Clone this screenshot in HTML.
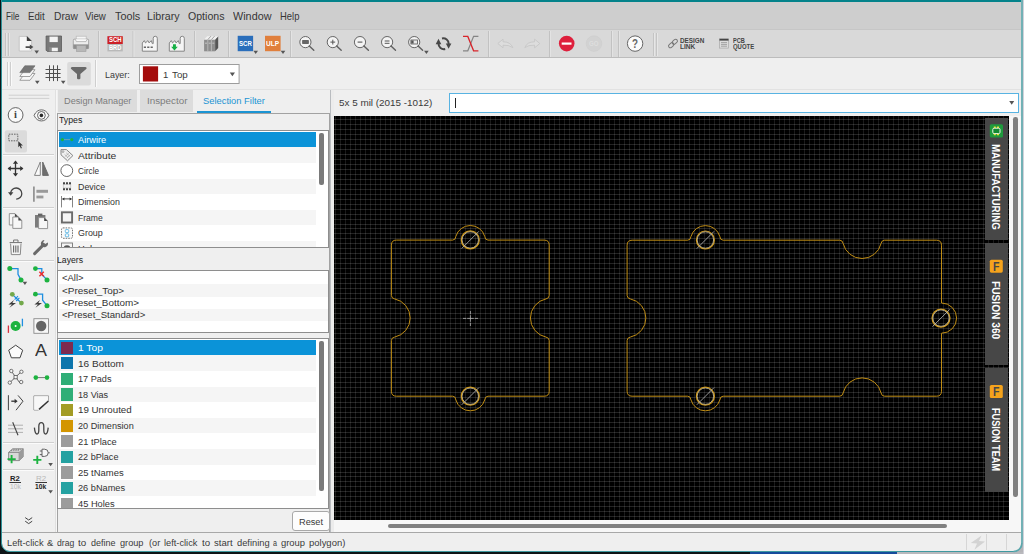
<!DOCTYPE html>
<html><head><meta charset="utf-8"><title>EAGLE Board Editor</title>
<style>
html,body{margin:0;padding:0;}
body{width:1024px;height:554px;overflow:hidden;position:relative;background:#8f9194;font-family:"Liberation Sans",sans-serif;}
.r{position:absolute;display:block;box-sizing:border-box;}
.t{position:absolute;white-space:nowrap;transform-origin:0 0;display:block;}
</style></head><body>
<div class="r" style="left:0px;top:0px;width:1024.00px;height:554.00px;background:linear-gradient(90deg,#0d1416 0px,#0d1416 750.5px,#164b9c 750.5px,#164b9c 897.5px,#b9b9bd 897.5px,#b9b9bd 1024px);"></div>
<div class="r" style="left:1023px;top:0px;width:1.00px;height:554.00px;background:#d2d2d9;"></div>
<div class="r" style="left:0px;top:0px;width:1.00px;height:554.00px;background:#0c1618;"></div>
<div class="r" id="win" style="left:1px;top:0;width:1022px;height:552px;background:#efefef;border-radius:0 0 8px 8px;overflow:hidden;box-shadow:inset 1px 0 0 #2f9299, inset -2px 0 0 #72b1b5, inset 0 -1px 0 #3f9aa0;"></div>
<div class="r" style="left:2px;top:0px;width:1019.00px;height:2.00px;background:#04838b;"></div>
<div class="r" style="left:1px;top:0px;width:1.00px;height:2.00px;background:#04838b;"></div>
<div class="r" style="left:1021px;top:0px;width:2.00px;height:2.00px;background:#04838b;"></div>
<div class="r" style="left:2px;top:2px;width:1019.00px;height:27.00px;background:#cecece;"></div>
<div class="r" style="left:2px;top:29px;width:1019.00px;height:1.00px;background:#c6c6c6;"></div>
<span class="t" style="left:5.90px;top:10.93px;font-size:10.6px;line-height:10.6px;color:#363636;transform:scaleX(0.7845);">File</span>
<span class="t" style="left:27.90px;top:10.93px;font-size:10.6px;line-height:10.6px;color:#363636;transform:scaleX(0.9143);">Edit</span>
<span class="t" style="left:53.70px;top:10.93px;font-size:10.6px;line-height:10.6px;color:#363636;transform:scaleX(0.9662);">Draw</span>
<span class="t" style="left:85.40px;top:10.93px;font-size:10.6px;line-height:10.6px;color:#363636;transform:scaleX(0.9173);">View</span>
<span class="t" style="left:114.50px;top:10.93px;font-size:10.6px;line-height:10.6px;color:#363636;transform:scaleX(1.0224);">Tools</span>
<span class="t" style="left:147.30px;top:10.93px;font-size:10.6px;line-height:10.6px;color:#363636;transform:scaleX(1.0030);">Library</span>
<span class="t" style="left:187.90px;top:10.93px;font-size:10.6px;line-height:10.6px;color:#363636;transform:scaleX(0.9991);">Options</span>
<span class="t" style="left:232.70px;top:10.93px;font-size:10.6px;line-height:10.6px;color:#363636;transform:scaleX(1.0212);">Window</span>
<span class="t" style="left:279.70px;top:10.93px;font-size:10.6px;line-height:10.6px;color:#363636;transform:scaleX(0.8899);">Help</span>
<div class="r" style="left:2px;top:30px;width:1019.00px;height:27.00px;background:#d9d9d9;"></div>
<div class="r" style="left:2px;top:57px;width:1019.00px;height:1.00px;background:#bcbcbc;"></div>
<div class="r" style="left:2px;top:58px;width:1019.00px;height:31.00px;background:#efefef;"></div>
<div class="r" style="left:2px;top:89px;width:1019.00px;height:1.00px;background:#e2e2e2;"></div>
<svg class="r" style="left:0;top:0;pointer-events:none" width="1024" height="554" viewBox="0 0 1024 554"><path d="M5.5 33v23M8.5 33v23" stroke="#c4c4c4" stroke-width="1"/><path d="M6.5 33v23M9.5 33v23" stroke="#e6e6e6" stroke-width="1"/><path d="M98.5 31v26" stroke="#c2c2c2" stroke-width="1"/><path d="M99.5 31v26" stroke="#e3e3e3" stroke-width="1"/><path d="M133 31v26" stroke="#c2c2c2" stroke-width="1"/><path d="M134 31v26" stroke="#e3e3e3" stroke-width="1"/><path d="M194.5 31v26" stroke="#c2c2c2" stroke-width="1"/><path d="M195.5 31v26" stroke="#e3e3e3" stroke-width="1"/><path d="M228.5 31v26" stroke="#c2c2c2" stroke-width="1"/><path d="M229.5 31v26" stroke="#e3e3e3" stroke-width="1"/><path d="M290.5 31v26" stroke="#c2c2c2" stroke-width="1"/><path d="M291.5 31v26" stroke="#e3e3e3" stroke-width="1"/><path d="M488.5 31v26" stroke="#c2c2c2" stroke-width="1"/><path d="M489.5 31v26" stroke="#e3e3e3" stroke-width="1"/><path d="M549.5 31v26" stroke="#c2c2c2" stroke-width="1"/><path d="M550.5 31v26" stroke="#e3e3e3" stroke-width="1"/><path d="M611.5 31v26" stroke="#c2c2c2" stroke-width="1"/><path d="M612.5 31v26" stroke="#e3e3e3" stroke-width="1"/><path d="M618.5 31v26" stroke="#c2c2c2" stroke-width="1"/><path d="M619.5 31v26" stroke="#e3e3e3" stroke-width="1"/><path d="M653.5 33v23M656.5 33v23" stroke="#c4c4c4" stroke-width="1"/><path d="M654.5 33v23M657.5 33v23" stroke="#e6e6e6" stroke-width="1"/><path d="M19.2 36.4h7.8l4.6 4.6v10h-12.4z" fill="#f6f6f6" stroke="#c2c2c2" stroke-width="0.9"/><path d="M26.8 36.1l5 5h-5z" fill="#3c3c3c"/><path d="M25.6 46.3h4.2v-1.7l3.6 2.5-3.6 2.5v-1.7h-4.2z" fill="#4a4a4a"/><path d="M34.4 50.5h4.6l-2.3 3.2z" fill="#555"/><path d="M46.1 36h15.4v15.4h-14.2l-1.2-1.2z" fill="#787878" stroke="#5a5a5a" stroke-width="0.8"/><rect x="49.5" y="36.6" width="8.3" height="5.5" fill="#f3f3f3"/><rect x="49.2" y="47.2" width="8.9" height="4.2" fill="#8c8c8c"/><rect x="51.8" y="47.8" width="6" height="3.4" fill="#f3f3f3"/><rect x="76.2" y="36.2" width="10" height="4.4" fill="#f5f5f5" stroke="#bdbdbd" stroke-width="0.8"/><rect x="73.3" y="39.2" width="15.3" height="9.4" rx="1" fill="#ededed" stroke="#9a9a9a" stroke-width="0.8"/><path d="M75.2 39.2l1.2 2.4h9.6l1.2-2.4" fill="#fafafa" stroke="#a5a5a5" stroke-width="0.7"/><rect x="73.3" y="44.4" width="15.3" height="4.4" fill="#8e8e8e"/><rect x="76.6" y="45.4" width="9.4" height="6" fill="#b8b8b8" stroke="#9a9a9a" stroke-width="0.6"/><rect x="107.4" y="36.2" width="15.4" height="7.8" fill="#cc2027"/><rect x="107.4" y="44" width="15.4" height="7.4" fill="#b9b9b9"/><path d="M142.3 51.2V43l2-2.4 1.2 2.3 2.4-2.3 1.2 2.3 2.2-2.3 1 3h0.9v-5.3a2 2 0 0 1 4.1 0V51.2z" fill="#f5f5f5" stroke="#858585" stroke-width="1" stroke-linejoin="round"/><path d="M143.8 47.2h2.2m1.2 0h2.2m1.2 0h2.2" stroke="#666" stroke-width="1.4"/><path d="M169.3 51.2V43l2-2.4 1.2 2.3 2.4-2.3 1.2 2.3 2.2-2.3 1 3h0.9v-5.3a2 2 0 0 1 4.1 0V51.2z" fill="#f5f5f5" stroke="#858585" stroke-width="1" stroke-linejoin="round"/><path d="M173 44.2h2.9v2.6h1.9l-3.35 3.6-3.35-3.6h1.9z" fill="#16b045"/><path d="M215.1 39.6l3.1-3.4v11.8l-3.1 3.3z" fill="#555"/><path d="M204.1 39.6h11v11.7h-11z" fill="#8e8e8e"/><path d="M207.8 39.6v11.7M211.4 39.6v11.7" stroke="#c9c9c9" stroke-width="0.7"/><path d="M205 43.2h2M208.7 43.2h2M212.3 43.2h2" stroke="#c4c4c4" stroke-width="1"/><path d="M204.1 39.6l3.1-3.4h11l-3.1 3.4z" fill="#f0f0f0"/><path d="M207.8 39.6l3.1-3.4M211.4 39.6l3.1-3.4" stroke="#8a8a8a" stroke-width="0.8"/><rect x="237.7" y="35.8" width="15.4" height="15.4" fill="#2a6ebb"/><path d="M253.4 50.7h4.6l-2.3 3.2z" fill="#555"/><rect x="265" y="35.8" width="15.6" height="15.4" fill="#e07f3c"/><path d="M280.7 50.7h4.6l-2.3 3.2z" fill="#555"/><circle cx="305.4" cy="42.1" r="5.6" fill="#f4f4f4" stroke="#666" stroke-width="1"/><path d="M309.3 46.0l4.5 4.3" stroke="#606060" stroke-width="1.4" stroke-linecap="round"/><rect x="302.1" y="40.1" width="6.8" height="3.8" rx="0.6" fill="#666"/><circle cx="332.8" cy="42.1" r="5.6" fill="#f4f4f4" stroke="#666" stroke-width="1"/><path d="M336.7 46.0l4.5 4.3" stroke="#606060" stroke-width="1.4" stroke-linecap="round"/><path d="M330.4 42.1h4.8M332.8 39.7v4.8" stroke="#555" stroke-width="1"/><circle cx="360" cy="42.1" r="5.6" fill="#f4f4f4" stroke="#666" stroke-width="1"/><path d="M363.9 46.0l4.5 4.3" stroke="#606060" stroke-width="1.4" stroke-linecap="round"/><path d="M357.6 42.1h4.8" stroke="#555" stroke-width="1.1"/><circle cx="387.1" cy="42.1" r="5.6" fill="#f4f4f4" stroke="#666" stroke-width="1"/><path d="M391.0 46.0l4.5 4.3" stroke="#606060" stroke-width="1.4" stroke-linecap="round"/><path d="M384.7 41h4.8M384.7 43.3h4.8" stroke="#555" stroke-width="1"/><circle cx="414.2" cy="42.1" r="5.6" fill="#f4f4f4" stroke="#666" stroke-width="1"/><path d="M418.1 46.0l4.5 4.3" stroke="#606060" stroke-width="1.4" stroke-linecap="round"/><rect x="410.9" y="40" width="6.6" height="4" fill="#e8e8e8" stroke="#555" stroke-width="0.8"/><rect x="411.2" y="40.5" width="2.4" height="3" fill="#555"/><path d="M424.1 50.8h4.6l-2.3 3.2z" fill="#555"/><path d="M438.5 43.6A5.5 5.5 0 0 0 445.2 49.1" fill="none" stroke="#484848" stroke-width="2"/><path d="M435.7 44.2h5.6l-2.8-5.4z" fill="#484848"/><path d="M448.7 43.9A5.5 5.5 0 0 0 442 38.4" fill="none" stroke="#484848" stroke-width="2"/><path d="M451.4 43.4h-5.6l2.8 5.4z" fill="#484848"/><path d="M463 50.8h4.8l5.8-14.4h4.8" fill="none" stroke="#858585" stroke-width="1.2"/><path d="M463 36.4h4.8l5.8 14.4h4.8" fill="none" stroke="#d8242b" stroke-width="1.3"/><path d="M497.8 43.5l5.2-4.3v2.6q7.6 0 9.8 5.8q-3.6-2.8-9.8-2.4v2.6z" fill="#dddddd" stroke="#c4c4c4" stroke-width="0.8" stroke-linejoin="round"/><path d="M539.8 43.5l-5.2-4.3v2.6q-7.6 0-9.8 5.8q3.6-2.8 9.8-2.4v2.6z" fill="#dddddd" stroke="#c4c4c4" stroke-width="0.8" stroke-linejoin="round"/><circle cx="566.7" cy="43.6" r="7.8" fill="#de1f3c"/><rect x="561.7" y="42.5" width="9.8" height="2.2" fill="#fff"/><circle cx="594" cy="43.6" r="7.8" fill="#d2d2d2" stroke="#cccccc" stroke-width="0.6"/><circle cx="635.1" cy="43.6" r="7.7" fill="#fbfbfb" stroke="#666" stroke-width="1"/><g fill="none" stroke="#777" stroke-width="1"><rect x="-2.9" y="-1.8" width="5.8" height="3.6" rx="1.8" transform="translate(671.2 45.2) rotate(-40)"/><rect x="-2.9" y="-1.8" width="5.8" height="3.6" rx="1.8" transform="translate(674.8 41.8) rotate(-40)"/></g><rect x="719.5" y="38.8" width="9" height="9.3" fill="#dcdcdc" stroke="#a9a9a9" stroke-width="0.7"/><rect x="719.5" y="38.8" width="9" height="1.8" fill="#444"/><path d="M721 42.6h6M721 44.4h6M721 46.2h6" stroke="#9c9c9c" stroke-width="0.9"/></svg>
<span class="t" style="left:109.30px;top:36.35px;font-size:7.5px;line-height:7.5px;color:#fff;font-weight:bold;transform:scaleX(0.7957);">SCH</span>
<span class="t" style="left:109.30px;top:43.75px;font-size:7.5px;line-height:7.5px;color:#fff;font-weight:bold;transform:scaleX(0.7508);">BRD</span>
<span class="t" style="left:238.90px;top:40.05px;font-size:7.5px;line-height:7.5px;color:#fff;font-weight:bold;transform:scaleX(0.8146);">SCR</span>
<span class="t" style="left:266.30px;top:40.05px;font-size:7.5px;line-height:7.5px;color:#fff;font-weight:bold;transform:scaleX(0.8733);">ULP</span>
<span class="t" style="left:589.30px;top:39.83px;font-size:8px;line-height:8px;color:#dedede;font-weight:bold;transform:scaleX(0.7634);">GO</span>
<span class="t" style="left:632.20px;top:37.30px;font-size:13px;line-height:13px;color:#666;font-weight:bold;transform:scaleX(0.7556);">?</span>
<span class="t" style="left:679.70px;top:38.17px;font-size:6.3px;line-height:6.3px;color:#444;font-weight:bold;transform:scaleX(1.0102);">DESIGN</span>
<span class="t" style="left:679.70px;top:43.97px;font-size:6.3px;line-height:6.3px;color:#444;font-weight:bold;transform:scaleX(1.0409);">LINK</span>
<span class="t" style="left:733.20px;top:38.17px;font-size:6.3px;line-height:6.3px;color:#444;font-weight:bold;transform:scaleX(0.8871);">PCB</span>
<span class="t" style="left:733.20px;top:43.97px;font-size:6.3px;line-height:6.3px;color:#444;font-weight:bold;transform:scaleX(0.9419);">QUOTE</span>
<svg class="r" style="left:0;top:0;pointer-events:none" width="1024" height="554" viewBox="0 0 1024 554"><path d="M7.5 62v24M10.5 62v24" stroke="#cfcfcf" stroke-width="1"/><path d="M8.5 62v24M11.5 62v24" stroke="#fafafa" stroke-width="1"/><path d="M19.8 72.6l5-6.8h10.2l-5 6.8z" fill="#f7f7f7" stroke="#8a8a8a" stroke-width="0.8" transform="translate(0 7.7)"/><path d="M19.8 72.6l5-6.8h10.2l-5 6.8z" fill="#f7f7f7" stroke="#8a8a8a" stroke-width="0.8" transform="translate(0 3.9)"/><path d="M19.8 72.6l5-6.8h10.2l-5 6.8z" fill="#767676" stroke="#666" stroke-width="0.6"/><path d="M35.0 80.7h4.6l-2.3 3.2z" fill="#555"/><path d="M49.5 65.3v15.8M53.5 65.3v15.8M57.5 65.3v15.8M45.5 69.5h15.1M45.5 73.5h15.1M45.5 77.5h15.1" stroke="#505050" stroke-width="1"/><path d="M60.9 80.7h4.6l-2.3 3.2z" fill="#555"/><rect x="67.2" y="61.9" width="23.6" height="23.6" rx="2" fill="#dbdbdb"/><path d="M72.3 66.9h13q1.8 0.1 1.2 1.8l-6.1 5.2v4.5q-1.7 1.7-3.4 0v-4.5l-6.1-5.2q-0.6-1.7 1.4-1.8z" fill="#696969"/><path d="M95.5 60v27" stroke="#cfcfcf" stroke-width="1"/><path d="M96.5 60v27" stroke="#fafafa" stroke-width="1"/><rect x="139.5" y="64.5" width="99.6" height="19" fill="#fff" stroke="#9d9d9d" stroke-width="1"/><rect x="142.9" y="66.3" width="15.2" height="15.2" fill="#a40c0c"/><path d="M229.8 72.5h5.2l-2.6 3.7z" fill="#555"/></svg>
<span class="t" style="left:104.60px;top:69.59px;font-size:9.7px;line-height:9.7px;color:#3a3a3a;transform:scaleX(0.9199);">Layer:</span>
<span class="t" style="left:163.30px;top:69.59px;font-size:9.7px;line-height:9.7px;color:#3a3a3a;transform:scaleX(0.9824);">1</span>
<span class="t" style="left:172.30px;top:69.59px;font-size:9.7px;line-height:9.7px;color:#3a3a3a;transform:scaleX(1.0102);">Top</span>
<div class="r" style="left:2px;top:90px;width:54.00px;height:442.00px;background:#efefef;"></div>
<div class="r" style="left:55px;top:90px;width:1.00px;height:442.00px;background:#e0e0e0;"></div>
<svg class="r" style="left:0;top:0;pointer-events:none" width="1024" height="554" viewBox="0 0 1024 554"><path d="M8.7 95.2h40.6M8.7 98.4h40.6" stroke="#cfcfcf" stroke-width="1"/><path d="M3 154.5h51" stroke="#d0d0d0" stroke-width="1"/><path d="M3 155.5h51" stroke="#fbfbfb" stroke-width="1"/><path d="M3 207.5h51" stroke="#d0d0d0" stroke-width="1"/><path d="M3 208.5h51" stroke="#fbfbfb" stroke-width="1"/><path d="M3 260.5h51" stroke="#d0d0d0" stroke-width="1"/><path d="M3 261.5h51" stroke="#fbfbfb" stroke-width="1"/><path d="M3 442.5h51" stroke="#d0d0d0" stroke-width="1"/><path d="M3 443.5h51" stroke="#fbfbfb" stroke-width="1"/><path d="M3 469.5h51" stroke="#d0d0d0" stroke-width="1"/><path d="M3 470.5h51" stroke="#fbfbfb" stroke-width="1"/><circle cx="15.6" cy="115" r="7.4" fill="#fafafa" stroke="#555" stroke-width="0.9"/><path d="M34.1 115.4C37 108 45.9 108 48.8 115.4C45.9 122.8 37 122.8 34.1 115.4z" fill="#fafafa" stroke="#555" stroke-width="0.9"/><circle cx="41.4" cy="115.4" r="3.9" fill="none" stroke="#555" stroke-width="0.9"/><circle cx="41.4" cy="115.4" r="1.8" fill="#2a2a2a"/><rect x="4.8" y="130.2" width="22.2" height="22.3" rx="2" fill="#dbdbdb"/><rect x="8.8" y="134.2" width="9" height="6.6" fill="none" stroke="#666" stroke-width="1" stroke-dasharray="1.6 1"/><path d="M18.3 141.2l4.6 4.2h-2.2l1.2 2.6-1 0.5-1.2-2.7-1.4 1.5z" fill="#333"/><path d="M15.5 161.5v14M8.5 168.5h14" stroke="#333" stroke-width="1.3"/><path d="M15.5 160.6l2.6 3.2h-5.2zM15.5 176.4l2.6-3.2h-5.2zM7.6 168.5l3.2-2.6v5.2zM23.4 168.5l-3.2-2.6v5.2z" fill="#333"/><path d="M40.3 162l-5.8 13.4h5.8z" fill="#fafafa" stroke="#777" stroke-width="0.9"/><path d="M42.7 162l5.8 13.4h-5.8z" fill="#6e6e6e" stroke="#666" stroke-width="0.9"/><path d="M10.6 193.4a5.6 5.6 0 1 1 5.6 5.8" fill="none" stroke="#444" stroke-width="1.3"/><path d="M8 192.2h5.4l-2.7 3.6z" fill="#444"/><path d="M33.9 186.4v15.4" stroke="#8a8a8a" stroke-width="1.6"/><path d="M36.4 191.3h11.6" stroke="#9a9a9a" stroke-width="3"/><path d="M36.4 197h7" stroke="#9a9a9a" stroke-width="2.8"/><path d="M9.3 213.6h5.6l3.4 3.4v8.0h-9z" fill="#f7f7f7" stroke="#8a8a8a" stroke-width="0.9"/><path d="M14.9 213.6l3.4 3.4h-3.4z" fill="#444"/><path d="M12.8 217h5.6l3.4 3.4v8.0h-9z" fill="#f7f7f7" stroke="#8a8a8a" stroke-width="0.9"/><path d="M18.400000000000002 217l3.4 3.4h-3.4z" fill="#444"/><rect x="35" y="215" width="10.4" height="12.6" fill="#7c7c7c"/><rect x="38" y="213.6" width="4.4" height="2.6" fill="#666"/><path d="M38.6 217.6h5.6l3.4 3.4v7.6h-9z" fill="#f7f7f7" stroke="#8a8a8a" stroke-width="0.9"/><path d="M44.2 217.6l3.4 3.4h-3.4z" fill="#444"/><path d="M9.6 242.6h12.4" stroke="#777" stroke-width="1.1"/><path d="M13.6 242.2v-2.2h4.4v2.2" fill="none" stroke="#777" stroke-width="1"/><path d="M10.6 243.6l0.7 11h9l0.7-11" fill="#f4f4f4" stroke="#8a8a8a" stroke-width="1"/><path d="M13.6 245.6v7M15.8 245.6v7M18 245.6v7" stroke="#666" stroke-width="1.1"/><path d="M34.6 253.6l9-9" stroke="#6a6a6a" stroke-width="3" stroke-linecap="round"/><path d="M47.9 242.6a3.6 3.6 0 1 1-3.4-2.6l-1.4 2.4 2 1.6z" fill="#6a6a6a"/><path d="M9.8 268.6h8.2v5.8l3 5.5" fill="none" stroke="#1f8fe0" stroke-width="1.3"/><circle cx="9.8" cy="268.6" r="2.5" fill="#1db340"/><circle cx="21" cy="279.9" r="2.5" fill="#1db340"/><path d="M22.6 281.7h4.6l-2.3 3.2z" fill="#555"/><path d="M35.4 268.6h6.4v5.8l5.2 5.5" fill="none" stroke="#1f8fe0" stroke-width="1.3"/><circle cx="35.4" cy="268.6" r="2.4" fill="#1db340"/><circle cx="47" cy="279.9" r="2.5" fill="#1db340"/><path d="M39.4 271.8l4.4 4.4M43.8 271.8l-4.4 4.4" stroke="#f02b2b" stroke-width="1.4"/><path d="M13.6 295.6l6.4 6.2" stroke="#1f8fe0" stroke-width="1.3"/><path d="M14.6 299.6l3.4-3.4M16.2 301l3.2-3.2" stroke="#1f8fe0" stroke-width="1.1"/><circle cx="12.3" cy="294.3" r="2.4" fill="#72a84a"/><circle cx="21.4" cy="303.1" r="2.4" fill="#72a84a"/><path d="M14.0 300.1l-5.6 4.4h3.6l-2.6 3.2l6.6-4.6h-3.6z" fill="#3c3c3c"/><path d="M35.4 294.2h7.2v6l4.4 5.5" fill="none" stroke="#1f8fe0" stroke-width="1.3"/><circle cx="35.4" cy="294.2" r="2.4" fill="#1db340"/><circle cx="47" cy="305.7" r="2.5" fill="#1db340"/><path d="M40.0 300.1l-5.6 4.4h3.6l-2.6 3.2l6.6-4.6h-3.6z" fill="#3c3c3c"/><path d="M22.4 318.7v7.6" stroke="#1f8fe0" stroke-width="1.3"/><path d="M8.4 325.5v7.4" stroke="#d8313e" stroke-width="1.3"/><circle cx="15.6" cy="326" r="5" fill="#1db340"/><circle cx="15.6" cy="326" r="1" fill="#fff"/><rect x="33.9" y="318.7" width="14.6" height="14.6" fill="#f7f7f7" stroke="#8a8a8a" stroke-width="0.9"/><circle cx="41.2" cy="326" r="5.2" fill="#666"/><path d="M15.7 345.2l7 5-2.7 7.6h-8.6l-2.7-7.6z" fill="#fbfbfb" stroke="#444" stroke-width="1"/><path d="M11.3 371l8.6 12M21.4 371.6l-11.6 11" stroke="#555" stroke-width="0.9"/><rect x="14" y="375.6" width="3.2" height="3.2" fill="#f7f7f7" stroke="#555" stroke-width="0.8"/><circle cx="11.3" cy="371" r="1.7" fill="#f7f7f7" stroke="#555" stroke-width="0.8"/><circle cx="21.4" cy="371.8" r="1.7" fill="#f7f7f7" stroke="#555" stroke-width="0.8"/><circle cx="9.8" cy="382.6" r="1.7" fill="#f7f7f7" stroke="#555" stroke-width="0.8"/><circle cx="21.2" cy="382" r="1.7" fill="#f7f7f7" stroke="#555" stroke-width="0.8"/><path d="M35.8 377.6h11.2" stroke="#777" stroke-width="1"/><circle cx="35.8" cy="377.6" r="2.3" fill="#1db340"/><circle cx="47" cy="377.6" r="2.3" fill="#1db340"/><path d="M8.4 395.2v15" stroke="#444" stroke-width="1"/><path d="M11.3 401.2h4.4" stroke="#333" stroke-width="1.3"/><path d="M14.6 398.8l3 2.4-3 2.4z" fill="#333"/><path d="M18 395.4l5 5.8-7 9" fill="none" stroke="#444" stroke-width="1"/><path d="M33.9 395.9h14.6v5.2M38.6 410h-4.7v-14.1" fill="none" stroke="#8a8a8a" stroke-width="0.9"/><path d="M34.2 396.2h14v5l-9 8.6h-5z" fill="#f7f7f7"/><path d="M39 409.4l9.4-8.4" stroke="#333" stroke-width="1.5"/><path d="M8 425.2h15M8 428.8h15M8 432.4h15" stroke="#a8a8a8" stroke-width="0.9"/><path d="M12.7 422.3l5.3 13" stroke="#444" stroke-width="1.1"/><path d="M34.4 427.6q0.6 6.4 2.6 6.4q1.8 0 1.8-4v-3.4q0-4 2.5-4q2.5 0 2.5 4v3.4q0 4 1.8 4q2 0 2.6-6.4" fill="none" stroke="#444" stroke-width="1.3"/><path d="M8.6 452.4l4-3.6h10.6v8l-4 3.8h-10.6z" fill="#d8d8d8" stroke="#777" stroke-width="0.8"/><path d="M8.6 452.4h10.6v8.2M19.2 452.4l4-3.6" fill="none" stroke="#777" stroke-width="0.8"/><path d="M19.2 452.4l4-3.6v8l-4 3.8z" fill="#9a9a9a"/><path d="M11 450.6h8M12.6 449.4h8" stroke="#666" stroke-width="0.7" stroke-dasharray="1 0.8"/><path d="M11.6 455v8.2M7.5 459.1h8.2" stroke="#1db340" stroke-width="1.9"/><path d="M42 449.2h2.6a3.6 3.6 0 0 1 0 7.2h-2.6z" fill="#f7f7f7" stroke="#555" stroke-width="0.9"/><path d="M39.8 451h2.2M39.8 454.6h2.2M48.2 452.8h1.6" stroke="#555" stroke-width="0.9"/><path d="M37.3 455.8v8.2M33.2 459.9h8.2" stroke="#1db340" stroke-width="1.9"/><path d="M48.3 463.1h4.6l-2.3 3.2z" fill="#555"/><path d="M9.4 482.5h11.6" stroke="#222" stroke-width="0.9"/><path d="M35.4 482.5h11.6" stroke="#222" stroke-width="0.9"/><path d="M48.3 490.3h4.6l-2.3 3.2z" fill="#555"/><path d="M25.2 517.6l3.5 2.4 3.5-2.4M25.2 521.2l3.5 2.4 3.5-2.4" fill="none" stroke="#444" stroke-width="1"/></svg>
<span class="t" style="left:13.90px;top:110.31px;font-size:10.5px;line-height:10.5px;color:#444;font-weight:bold;transform:scaleX(1.0000);font-family:'Liberation Serif',serif;">i</span>
<span class="t" style="left:35.40px;top:343.28px;font-size:16.8px;line-height:16.8px;color:#333;transform:scaleX(1.0708);">A</span>
<span class="t" style="left:9.80px;top:475.56px;font-size:6.9px;line-height:6.9px;color:#222;font-weight:bold;transform:scaleX(1.1110);">R2</span>
<span class="t" style="left:10.10px;top:483.61px;font-size:6.6px;line-height:6.6px;color:#b9b9b9;transform:scaleX(1.0243);">10k</span>
<span class="t" style="left:35.60px;top:475.81px;font-size:6.6px;line-height:6.6px;color:#b9b9b9;transform:scaleX(1.2089);">R2</span>
<span class="t" style="left:35.40px;top:483.56px;font-size:6.9px;line-height:6.9px;color:#222;font-weight:bold;transform:scaleX(0.9728);">10k</span>
<div class="r" style="left:56px;top:90px;width:1.00px;height:442.00px;background:#f6f6f6;"></div>
<div class="r" style="left:58px;top:89.5px;width:79.00px;height:22.10px;background:#dcdcdc;"></div>
<div class="r" style="left:140px;top:89.5px;width:52.60px;height:22.10px;background:#dcdcdc;"></div>
<span class="t" style="left:63.80px;top:95.79px;font-size:9.7px;line-height:9.7px;color:#7d7d7d;transform:scaleX(0.9484);">Design Manager</span>
<span class="t" style="left:146.70px;top:95.79px;font-size:9.7px;line-height:9.7px;color:#7d7d7d;transform:scaleX(1.0150);">Inspector</span>
<span class="t" style="left:202.80px;top:95.79px;font-size:9.7px;line-height:9.7px;color:#1b94d3;transform:scaleX(0.9664);">Selection Filter</span>
<div class="r" style="left:196.7px;top:111.4px;width:74.20px;height:1.90px;background:#1b94d3;"></div>
<div class="r" style="left:57px;top:113px;width:273.00px;height:419.00px;background:#efefef;border:1px solid #a2a2a2;border-bottom:none;"></div>
<span class="t" style="left:58.80px;top:114.99px;font-size:9.7px;line-height:9.7px;color:#222;transform:scaleX(0.9042);">Types</span>
<div class="r" style="left:57.4px;top:130.2px;width:272.00px;height:117.80px;background:#fff;border:1px solid #8e8e8e;"></div>
<div class="r" style="left:58.6px;top:131.8px;width:257.20px;height:15.58px;background:#0b93d8;"></div>
<span class="t" style="left:78.20px;top:134.99px;font-size:9.7px;line-height:9.7px;color:#fff;transform:scaleX(0.9514);">Airwire</span>
<div class="r" style="left:58.6px;top:147.38000000000002px;width:257.20px;height:15.58px;background:#f5f5f5;"></div>
<span class="t" style="left:78.20px;top:150.57px;font-size:9.7px;line-height:9.7px;color:#333;transform:scaleX(1.0602);">Attribute</span>
<span class="t" style="left:78.20px;top:166.15px;font-size:9.7px;line-height:9.7px;color:#333;transform:scaleX(0.8511);">Circle</span>
<div class="r" style="left:58.6px;top:178.54000000000002px;width:257.20px;height:15.58px;background:#f5f5f5;"></div>
<span class="t" style="left:78.20px;top:181.73px;font-size:9.7px;line-height:9.7px;color:#333;transform:scaleX(0.9174);">Device</span>
<span class="t" style="left:78.20px;top:197.31px;font-size:9.7px;line-height:9.7px;color:#333;transform:scaleX(0.9143);">Dimension</span>
<div class="r" style="left:58.6px;top:209.70000000000002px;width:257.20px;height:15.58px;background:#f5f5f5;"></div>
<span class="t" style="left:78.20px;top:212.89px;font-size:9.7px;line-height:9.7px;color:#333;transform:scaleX(0.8849);">Frame</span>
<span class="t" style="left:78.20px;top:228.47px;font-size:9.7px;line-height:9.7px;color:#333;transform:scaleX(0.9199);">Group</span>
<div class="r" style="left:319.4px;top:132.6px;width:4.40px;height:52.20px;background:#7a7a7a;border-radius:2px;"></div>
<span class="t" style="left:57.00px;top:254.69px;font-size:9.7px;line-height:9.7px;color:#222;transform:scaleX(0.8964);">Layers</span>
<div class="r" style="left:57.4px;top:269.6px;width:272.00px;height:63.60px;background:#fff;border:1px solid #8e8e8e;"></div>
<span class="t" style="left:61.70px;top:273.29px;font-size:9.7px;line-height:9.7px;color:#333;transform:scaleX(0.9769);">&lt;All&gt;</span>
<div class="r" style="left:58.6px;top:284.35px;width:269.80px;height:12.25px;background:#f5f5f5;"></div>
<span class="t" style="left:61.70px;top:285.54px;font-size:9.7px;line-height:9.7px;color:#333;transform:scaleX(1.0298);">&lt;Preset_Top&gt;</span>
<span class="t" style="left:61.70px;top:297.79px;font-size:9.7px;line-height:9.7px;color:#333;transform:scaleX(1.0213);">&lt;Preset_Bottom&gt;</span>
<div class="r" style="left:58.6px;top:308.85px;width:269.80px;height:12.25px;background:#f5f5f5;"></div>
<span class="t" style="left:61.70px;top:310.04px;font-size:9.7px;line-height:9.7px;color:#333;transform:scaleX(0.9913);">&lt;Preset_Standard&gt;</span>
<div class="r" style="left:57.4px;top:338px;width:272.00px;height:171.40px;background:#fff;border:1px solid #8e8e8e;overflow:hidden;"></div>
<div class="r" style="left:58.6px;top:339.9px;width:257.20px;height:15.58px;background:#0b93d8;"></div>
<div class="r" style="left:61px;top:341.7px;width:12.00px;height:12.20px;background:#7c2b50;"></div>
<span class="t" style="left:78.20px;top:343.09px;font-size:9.7px;line-height:9.7px;color:#fff;transform:scaleX(1.0571);">1 Top</span>
<div class="r" style="left:58.6px;top:355.47999999999996px;width:257.20px;height:15.58px;background:#f5f5f5;"></div>
<div class="r" style="left:61px;top:357.28px;width:12.00px;height:12.20px;background:#0d75ac;"></div>
<span class="t" style="left:78.20px;top:358.67px;font-size:9.7px;line-height:9.7px;color:#333;transform:scaleX(1.0404);">16 Bottom</span>
<div class="r" style="left:61px;top:372.86px;width:12.00px;height:12.20px;background:#2fae77;"></div>
<span class="t" style="left:78.20px;top:374.25px;font-size:9.7px;line-height:9.7px;color:#333;transform:scaleX(0.9412);">17 Pads</span>
<div class="r" style="left:58.6px;top:386.64px;width:257.20px;height:15.58px;background:#f5f5f5;"></div>
<div class="r" style="left:61px;top:388.44px;width:12.00px;height:12.20px;background:#2fae77;"></div>
<span class="t" style="left:78.20px;top:389.83px;font-size:9.7px;line-height:9.7px;color:#333;transform:scaleX(0.9385);">18 Vias</span>
<div class="r" style="left:61px;top:404.02px;width:12.00px;height:12.20px;background:#a39c25;"></div>
<span class="t" style="left:78.20px;top:405.41px;font-size:9.7px;line-height:9.7px;color:#333;transform:scaleX(1.0077);">19 Unrouted</span>
<div class="r" style="left:58.6px;top:417.79999999999995px;width:257.20px;height:15.58px;background:#f5f5f5;"></div>
<div class="r" style="left:61px;top:419.59999999999997px;width:12.00px;height:12.20px;background:#d39500;"></div>
<span class="t" style="left:78.20px;top:420.99px;font-size:9.7px;line-height:9.7px;color:#333;transform:scaleX(0.9408);">20 Dimension</span>
<div class="r" style="left:61px;top:435.18px;width:12.00px;height:12.20px;background:#9c9c9c;"></div>
<span class="t" style="left:78.20px;top:436.57px;font-size:9.7px;line-height:9.7px;color:#333;transform:scaleX(0.9593);">21 tPlace</span>
<div class="r" style="left:58.6px;top:448.96px;width:257.20px;height:15.58px;background:#f5f5f5;"></div>
<div class="r" style="left:61px;top:450.76px;width:12.00px;height:12.20px;background:#24a1a1;"></div>
<span class="t" style="left:78.20px;top:452.15px;font-size:9.7px;line-height:9.7px;color:#333;transform:scaleX(0.9387);">22 bPlace</span>
<div class="r" style="left:61px;top:466.34px;width:12.00px;height:12.20px;background:#9c9c9c;"></div>
<span class="t" style="left:78.20px;top:467.73px;font-size:9.7px;line-height:9.7px;color:#333;transform:scaleX(0.9743);">25 tNames</span>
<div class="r" style="left:58.6px;top:480.12px;width:257.20px;height:15.58px;background:#f5f5f5;"></div>
<div class="r" style="left:61px;top:481.92px;width:12.00px;height:12.20px;background:#24a1a1;"></div>
<span class="t" style="left:78.20px;top:483.31px;font-size:9.7px;line-height:9.7px;color:#333;transform:scaleX(0.9495);">26 bNames</span>
<div class="r" style="left:61px;top:497.5px;width:12.00px;height:10.90px;background:#9c9c9c;"></div>
<span class="t" style="left:78.20px;top:498.89px;font-size:9.7px;line-height:9.7px;color:#333;transform:scaleX(0.9586);">45 Holes</span>
<div class="r" style="left:319.4px;top:340.6px;width:4.40px;height:150.80px;background:#7a7a7a;border-radius:2px;"></div>
<div class="r" style="left:291.6px;top:511px;width:38.20px;height:20.40px;background:#fdfdfd;border:1px solid #a8a8a8;border-radius:3px;"></div>
<span class="t" style="left:298.50px;top:516.79px;font-size:9.7px;line-height:9.7px;color:#3a3a3a;transform:scaleX(0.9471);">Reset</span>
<div class="r" style="left:330px;top:90px;width:1.00px;height:442.00px;background:#b9bcc0;"></div>
<div class="r" style="left:331px;top:90px;width:2.50px;height:442.00px;background:#ececec;"></div>
<span class="t" style="left:339.00px;top:97.99px;font-size:9.7px;line-height:9.7px;color:#3a3a3a;transform:scaleX(1.0201);">5x 5 mil (2015 -1012)</span>
<div class="r" style="left:449.4px;top:92.8px;width:569.60px;height:19.80px;background:#fff;border:1.5px solid #58b3e2;"></div>
<div class="r" style="left:455.4px;top:97.6px;width:1.00px;height:10.20px;background:#222;"></div>
<svg class="r" style="left:0;top:0;pointer-events:none" width="1024" height="554" viewBox="0 0 1024 554"><path d="M1009.2 101h5l-2.5 3.8z" fill="#555"/></svg>
<div class="r" style="left:333.5px;top:116px;width:675.30px;height:403.60px;background:#000;"></div>
<svg class="r" style="left:0;top:0" width="1024" height="554" viewBox="0 0 1024 554"><path d="M335.5 116V519.6M340.5 116V519.6M345.5 116V519.6M350.5 116V519.6M355.5 116V519.6M360.5 116V519.6M365.5 116V519.6M370.5 116V519.6M375.5 116V519.6M380.5 116V519.6M385.5 116V519.6M390.5 116V519.6M395.5 116V519.6M400.5 116V519.6M405.5 116V519.6M410.5 116V519.6M415.5 116V519.6M420.5 116V519.6M425.5 116V519.6M430.5 116V519.6M435.5 116V519.6M440.5 116V519.6M445.5 116V519.6M450.5 116V519.6M455.5 116V519.6M460.5 116V519.6M465.5 116V519.6M470.5 116V519.6M475.5 116V519.6M480.5 116V519.6M485.5 116V519.6M490.5 116V519.6M495.5 116V519.6M500.5 116V519.6M505.5 116V519.6M509.5 116V519.6M514.5 116V519.6M519.5 116V519.6M524.5 116V519.6M529.5 116V519.6M534.5 116V519.6M539.5 116V519.6M544.5 116V519.6M549.5 116V519.6M554.5 116V519.6M559.5 116V519.6M564.5 116V519.6M569.5 116V519.6M574.5 116V519.6M579.5 116V519.6M584.5 116V519.6M589.5 116V519.6M594.5 116V519.6M599.5 116V519.6M604.5 116V519.6M609.5 116V519.6M614.5 116V519.6M619.5 116V519.6M624.5 116V519.6M629.5 116V519.6M634.5 116V519.6M639.5 116V519.6M644.5 116V519.6M649.5 116V519.6M654.5 116V519.6M659.5 116V519.6M664.5 116V519.6M669.5 116V519.6M674.5 116V519.6M679.5 116V519.6M684.5 116V519.6M689.5 116V519.6M694.5 116V519.6M699.5 116V519.6M704.5 116V519.6M709.5 116V519.6M714.5 116V519.6M719.5 116V519.6M724.5 116V519.6M729.5 116V519.6M734.5 116V519.6M739.5 116V519.6M744.5 116V519.6M749.5 116V519.6M754.5 116V519.6M759.5 116V519.6M764.5 116V519.6M769.5 116V519.6M774.5 116V519.6M779.5 116V519.6M784.5 116V519.6M789.5 116V519.6M794.5 116V519.6M799.5 116V519.6M804.5 116V519.6M809.5 116V519.6M814.5 116V519.6M819.5 116V519.6M824.5 116V519.6M829.5 116V519.6M834.5 116V519.6M839.5 116V519.6M843.5 116V519.6M848.5 116V519.6M853.5 116V519.6M858.5 116V519.6M863.5 116V519.6M868.5 116V519.6M873.5 116V519.6M878.5 116V519.6M883.5 116V519.6M888.5 116V519.6M893.5 116V519.6M898.5 116V519.6M903.5 116V519.6M908.5 116V519.6M913.5 116V519.6M918.5 116V519.6M923.5 116V519.6M928.5 116V519.6M933.5 116V519.6M938.5 116V519.6M943.5 116V519.6M948.5 116V519.6M953.5 116V519.6M958.5 116V519.6M963.5 116V519.6M968.5 116V519.6M973.5 116V519.6M978.5 116V519.6M983.5 116V519.6M988.5 116V519.6M993.5 116V519.6M998.5 116V519.6M1003.5 116V519.6" stroke="#fff" stroke-opacity="0.105" stroke-width="1" fill="none" shape-rendering="crispEdges"/><path d="M333.5 119.5H1008.8M333.5 124.5H1008.8M333.5 129.5H1008.8M333.5 134.5H1008.8M333.5 139.5H1008.8M333.5 144.5H1008.8M333.5 149.5H1008.8M333.5 154.5H1008.8M333.5 159.5H1008.8M333.5 164.5H1008.8M333.5 169.5H1008.8M333.5 174.5H1008.8M333.5 179.5H1008.8M333.5 184.5H1008.8M333.5 189.5H1008.8M333.5 194.5H1008.8M333.5 199.5H1008.8M333.5 204.5H1008.8M333.5 209.5H1008.8M333.5 214.5H1008.8M333.5 219.5H1008.8M333.5 224.5H1008.8M333.5 228.5H1008.8M333.5 233.5H1008.8M333.5 238.5H1008.8M333.5 243.5H1008.8M333.5 248.5H1008.8M333.5 253.5H1008.8M333.5 258.5H1008.8M333.5 263.5H1008.8M333.5 268.5H1008.8M333.5 273.5H1008.8M333.5 278.5H1008.8M333.5 283.5H1008.8M333.5 288.5H1008.8M333.5 293.5H1008.8M333.5 298.5H1008.8M333.5 303.5H1008.8M333.5 308.5H1008.8M333.5 313.5H1008.8M333.5 318.5H1008.8M333.5 323.5H1008.8M333.5 328.5H1008.8M333.5 333.5H1008.8M333.5 338.5H1008.8M333.5 343.5H1008.8M333.5 348.5H1008.8M333.5 352.5H1008.8M333.5 357.5H1008.8M333.5 362.5H1008.8M333.5 367.5H1008.8M333.5 372.5H1008.8M333.5 377.5H1008.8M333.5 382.5H1008.8M333.5 387.5H1008.8M333.5 392.5H1008.8M333.5 397.5H1008.8M333.5 402.5H1008.8M333.5 407.5H1008.8M333.5 412.5H1008.8M333.5 417.5H1008.8M333.5 422.5H1008.8M333.5 427.5H1008.8M333.5 432.5H1008.8M333.5 437.5H1008.8M333.5 442.5H1008.8M333.5 447.5H1008.8M333.5 452.5H1008.8M333.5 457.5H1008.8M333.5 462.5H1008.8M333.5 467.5H1008.8M333.5 472.5H1008.8M333.5 476.5H1008.8M333.5 481.5H1008.8M333.5 486.5H1008.8M333.5 491.5H1008.8M333.5 496.5H1008.8M333.5 501.5H1008.8M333.5 506.5H1008.8M333.5 511.5H1008.8M333.5 516.5H1008.8" stroke="#fff" stroke-opacity="0.14" stroke-width="1" fill="none" shape-rendering="crispEdges"/><path d="M396.4 240.1H452.6 Q455.6 240.1 455.90000000000003 236.29999999999998A15 15 0 0 1 484.7 236.29999999999998Q485.0 240.1 488.0 240.1H544.2Q549.2 240.1 549.2 245.1V295.4Q549.2 298.3 546.0 298.9A19.5 19.5 0 0 0 546.0 337.1Q549.2 337.7 549.2 340.6V391.2Q549.2 396.2 544.2 396.2H488.0Q485.0 396.2 484.7 400.0A15 15 0 0 1 455.90000000000003 400.0Q455.6 396.2 452.6 396.2H396.4Q391.4 396.2 391.4 391.2V340.6Q391.4 337.7 394.59999999999997 337.1A19.5 19.5 0 0 0 394.59999999999997 298.9Q391.4 298.3 391.4 295.4V245.1Q391.4 240.1 396.4 240.1Z" fill="none" stroke="#c08d14" stroke-width="1"/><path d="M632.1 240.2H687.6999999999999 Q690.6999999999999 240.2 691.0 236.39999999999998A15 15 0 0 1 719.8 236.39999999999998Q720.1 240.2 723.1 240.2H839.7Q842.5 240.2 843.1 243.39999999999998A19.5 19.5 0 0 0 881.1 243.39999999999998Q881.7 240.2 884.5 240.2H936.5Q941.5 240.2 941.5 245.2V303A15.1 15.1 0 0 1 941.5 333.2V391.2Q941.5 396.2 936.5 396.2H884.5Q881.7 396.2 881.1 393.0A19.5 19.5 0 0 0 843.1 393.0Q842.5 396.2 839.7 396.2H723.1Q720.1 396.2 719.8 400.0A15 15 0 0 1 691.0 400.0Q690.6999999999999 396.2 687.6999999999999 396.2H632.1Q627.1 396.2 627.1 391.2V340.6Q627.1 337.7 630.3000000000001 337.1A19.5 19.5 0 0 0 630.3000000000001 298.9Q627.1 298.3 627.1 295.4V245.2Q627.1 240.2 632.1 240.2Z" fill="none" stroke="#c08d14" stroke-width="1"/><circle cx="470.3" cy="239.9" r="9" fill="none" stroke="#cf9712" stroke-width="1.2"/><circle cx="470.3" cy="239.9" r="8.2" fill="none" stroke="#d9cfb2" stroke-width="0.75"/><path d="M461.7 248.5L478.90000000000003 231.3" stroke="#bdbdbd" stroke-width="0.8"/><circle cx="470.3" cy="396.2" r="9" fill="none" stroke="#cf9712" stroke-width="1.2"/><circle cx="470.3" cy="396.2" r="8.2" fill="none" stroke="#d9cfb2" stroke-width="0.75"/><path d="M461.7 404.8L478.90000000000003 387.59999999999997" stroke="#bdbdbd" stroke-width="0.8"/><circle cx="705.4" cy="240" r="9" fill="none" stroke="#cf9712" stroke-width="1.2"/><circle cx="705.4" cy="240" r="8.2" fill="none" stroke="#d9cfb2" stroke-width="0.75"/><path d="M696.8 248.6L714.0 231.4" stroke="#bdbdbd" stroke-width="0.8"/><circle cx="705.4" cy="396.2" r="9" fill="none" stroke="#cf9712" stroke-width="1.2"/><circle cx="705.4" cy="396.2" r="8.2" fill="none" stroke="#d9cfb2" stroke-width="0.75"/><path d="M696.8 404.8L714.0 387.59999999999997" stroke="#bdbdbd" stroke-width="0.8"/><circle cx="941" cy="318.1" r="9" fill="none" stroke="#cf9712" stroke-width="1.2"/><circle cx="941" cy="318.1" r="8.2" fill="none" stroke="#d9cfb2" stroke-width="0.75"/><path d="M932.4 326.70000000000005L949.6 309.5" stroke="#bdbdbd" stroke-width="0.8"/><path d="M463 318.4h15M470.4 311v15" stroke="#b5b5b5" stroke-width="0.8" stroke-dasharray="3.2 1 6.6 1 3.2"/></svg>
<div class="r" style="left:985px;top:118px;width:22.80px;height:121.60px;background:#474747;"></div>
<div class="r" style="left:985px;top:243.2px;width:22.80px;height:122.20px;background:#474747;"></div>
<div class="r" style="left:985px;top:368.2px;width:22.80px;height:123.40px;background:#474747;"></div>
<span class="t" style="left:992.2px;top:144.0px;font-size:10.5px;line-height:10.5px;color:#fff;font-weight:bold;transform-origin:0 0;transform:rotate(90deg) scaleX(0.9251) translateY(-8.89px);">MANUFACTURING</span>
<span class="t" style="left:992.2px;top:281.3px;font-size:10.5px;line-height:10.5px;color:#fff;font-weight:bold;transform-origin:0 0;transform:rotate(90deg) scaleX(0.9683) translateY(-8.89px);">FUSION 360</span>
<span class="t" style="left:992.2px;top:408.0px;font-size:10.5px;line-height:10.5px;color:#fff;font-weight:bold;transform-origin:0 0;transform:rotate(90deg) scaleX(0.8710) translateY(-8.89px);">FUSION TEAM</span>
<svg class="r" style="left:0;top:0;pointer-events:none" width="1024" height="554" viewBox="0 0 1024 554"><rect x="989.8" y="124.3" width="13.2" height="13.2" rx="1.5" fill="#1f9a3d"/><path d="M993.8 127.4h5.2M993.8 134.4h5.2" stroke="#e6de25" stroke-width="1.6" stroke-dasharray="2 1.2"/><rect x="992.8" y="128.2" width="7.2" height="5.4" rx="1.3" fill="#128a32" stroke="#f4f4e4" stroke-width="1"/><rect x="989.8" y="259.7" width="13" height="13" rx="1.6" fill="#f5a31c"/><rect x="989.8" y="385" width="13" height="13" rx="1.6" fill="#f5a31c"/></svg>
<span class="t" style="left:993.30px;top:259.63px;font-size:13.2px;line-height:13.2px;color:#474747;font-weight:bold;transform:scaleX(0.8061);">F</span>
<span class="t" style="left:993.30px;top:384.93px;font-size:13.2px;line-height:13.2px;color:#474747;font-weight:bold;transform:scaleX(0.8061);">F</span>
<div class="r" style="left:1008.8px;top:116px;width:12.20px;height:416.00px;background:#f7f7f7;"></div>
<div class="r" style="left:333.5px;top:519.6px;width:687.50px;height:12.40px;background:#f7f7f7;"></div>
<div class="r" style="left:1013.2px;top:117.2px;width:4.40px;height:380.00px;background:#808080;border-radius:2.2px;"></div>
<div class="r" style="left:388.2px;top:523.8px;width:558.60px;height:4.40px;background:#808080;border-radius:2.2px;"></div>
<div class="r" style="left:2px;top:532px;width:1019.00px;height:1.00px;background:#a8a8a8;"></div>
<div class="r" style="left:2px;top:533px;width:1019.00px;height:18.00px;background:#efefef;"></div>
<span class="t" style="left:6.50px;top:537.82px;font-size:9.9px;line-height:9.9px;color:#3a3a3a;transform:scaleX(0.9370);">Left-click</span>
<span class="t" style="left:46.90px;top:537.82px;font-size:9.9px;line-height:9.9px;color:#3a3a3a;transform:scaleX(0.9389);">&amp;</span>
<span class="t" style="left:56.50px;top:537.82px;font-size:9.9px;line-height:9.9px;color:#3a3a3a;transform:scaleX(0.8731);">drag</span>
<span class="t" style="left:78.10px;top:537.82px;font-size:9.9px;line-height:9.9px;color:#3a3a3a;transform:scaleX(0.9932);">to</span>
<span class="t" style="left:91.00px;top:537.82px;font-size:9.9px;line-height:9.9px;color:#3a3a3a;transform:scaleX(0.9120);">define</span>
<span class="t" style="left:120.30px;top:537.82px;font-size:9.9px;line-height:9.9px;color:#3a3a3a;transform:scaleX(0.9281);">group</span>
<span class="t" style="left:148.80px;top:537.82px;font-size:9.9px;line-height:9.9px;color:#3a3a3a;transform:scaleX(0.9256);">(or</span>
<span class="t" style="left:164.00px;top:537.82px;font-size:9.9px;line-height:9.9px;color:#3a3a3a;transform:scaleX(0.9370);">left-click</span>
<span class="t" style="left:202.00px;top:537.82px;font-size:9.9px;line-height:9.9px;color:#3a3a3a;transform:scaleX(0.9811);">to</span>
<span class="t" style="left:213.80px;top:537.82px;font-size:9.9px;line-height:9.9px;color:#3a3a3a;transform:scaleX(0.9660);">start</span>
<span class="t" style="left:236.60px;top:537.82px;font-size:9.9px;line-height:9.9px;color:#3a3a3a;transform:scaleX(0.9429);">defining</span>
<span class="t" style="left:273.20px;top:537.82px;font-size:9.9px;line-height:9.9px;color:#3a3a3a;transform:scaleX(0.7265);">a</span>
<span class="t" style="left:281.10px;top:537.82px;font-size:9.9px;line-height:9.9px;color:#3a3a3a;transform:scaleX(0.9518);">group</span>
<span class="t" style="left:309.20px;top:537.82px;font-size:9.9px;line-height:9.9px;color:#3a3a3a;transform:scaleX(0.9585);">polygon)</span>
<svg class="r" style="left:0;top:0;pointer-events:none" width="1024" height="554" viewBox="0 0 1024 554"><path d="M966.5 534v16M986.5 534v16M1006.5 534v16" stroke="#d6d6d6" stroke-width="1"/><path d="M981.6 535.6l-10.8 7.4 6.2 0.4-2.6 6.4 10.6-8.3-6-0.4z" fill="#d3d3d3"/></svg>
<div class="r" style="left:1px;top:0;width:1022px;height:552px;border-radius:0 0 8px 8px;box-shadow:inset 1px 0 0 #2f9299, inset -2px 0 0 #72b1b5, inset 0 -1px 0 #3f9aa0, 0 0 0 20px transparent;pointer-events:none;"></div>
<div class="r" style="left:58.4px;top:241.3px;width:257.40px;height:5.90px;background:#f5f5f5;"></div>
<svg class="r" style="left:0;top:0;pointer-events:none" width="1024" height="554" viewBox="0 0 1024 554"><path d="M62.4 139.6h9.4" stroke="#6aa0b8" stroke-width="1"/><circle cx="62.4" cy="139.6" r="1.6" fill="#1db340"/><circle cx="71.8" cy="139.6" r="1.6" fill="#1db340"/><path d="M61 149.6h5.4l6.5 6-5.4 5.2-6.5-6z" fill="#f1f1f1" stroke="#7a7a7a" stroke-width="0.9" stroke-linejoin="round"/><circle cx="63" cy="151.6" r="0.9" fill="none" stroke="#777" stroke-width="0.6"/><path d="M64.6 154.4l3.6 3.4M66.2 152.8l3.6 3.4M65.2 156.6l3.4-3.4M66.8 158.2l3.4-3.4" stroke="#999" stroke-width="0.6"/><circle cx="66.8" cy="170.6" r="5.9" fill="#fff" stroke="#555" stroke-width="0.9"/><rect x="63.2" y="184.2" width="7.6" height="3.8" fill="#f2f2f2" stroke="#b5b5b5" stroke-width="0.6"/><path d="M63 183.2h2m1 0h2m1 0h2M63 189.2h2m1 0h2m1 0h2" stroke="#444" stroke-width="1.9"/><path d="M61.5 196v11.4M72.5 196v11.4" stroke="#666" stroke-width="0.8"/><path d="M62.6 198.9h8.8" stroke="#333" stroke-width="0.9"/><path d="M62 198.9l2.4-1.5v3zM72 198.9l-2.4-1.5v3z" fill="#333"/><rect x="61.9" y="212.3" width="10.2" height="10.2" fill="#f4f4f4" stroke="#6a6a6a" stroke-width="1.9"/><rect x="61.5" y="227.9" width="11" height="10.4" rx="1.5" fill="#fafafa" stroke="#666" stroke-width="0.9" stroke-dasharray="1.6 1"/><rect x="65.3" y="229.6" width="3.4" height="3" rx="0.8" fill="none" stroke="#58b3e2" stroke-width="0.9"/><rect x="65.3" y="233.8" width="3.4" height="3" rx="0.8" fill="none" stroke="#58b3e2" stroke-width="0.9"/><rect x="61.5" y="243" width="11" height="6" fill="#f4f4f4" stroke="#777" stroke-width="0.9"/><circle cx="67" cy="248.6" r="3.4" fill="#555"/></svg>
<span class="t" style="left:78.20px;top:244.49px;font-size:9.7px;line-height:9.7px;color:#222;transform:scaleX(0.9674);">Hole</span>
<div class="r" style="left:57.4px;top:247.2px;width:272.00px;height:1.00px;background:#8e8e8e;"></div>
<div class="r" style="left:58px;top:248.2px;width:271.00px;height:6.30px;background:#efefef;"></div>
<svg class="r" style="left:0;top:0;pointer-events:none" width="1024" height="554" viewBox="0 0 1024 554"><path d="M0 543V554H11V552H10A8.5 8.5 0 0 1 1.5 543.5Z" fill="#0d1517"/><path d="M1.5 543A8.5 8.5 0 0 0 10 551.5" fill="none" stroke="#3a979d" stroke-width="1"/><path d="M1023 543V552H1013.5A8.5 8.5 0 0 0 1022 543Z" fill="#b4b4b8"/><path d="M1022 543A8.5 8.5 0 0 1 1013.5 551.5" fill="none" stroke="#5aa7ac" stroke-width="1.6"/></svg>
</body></html>
